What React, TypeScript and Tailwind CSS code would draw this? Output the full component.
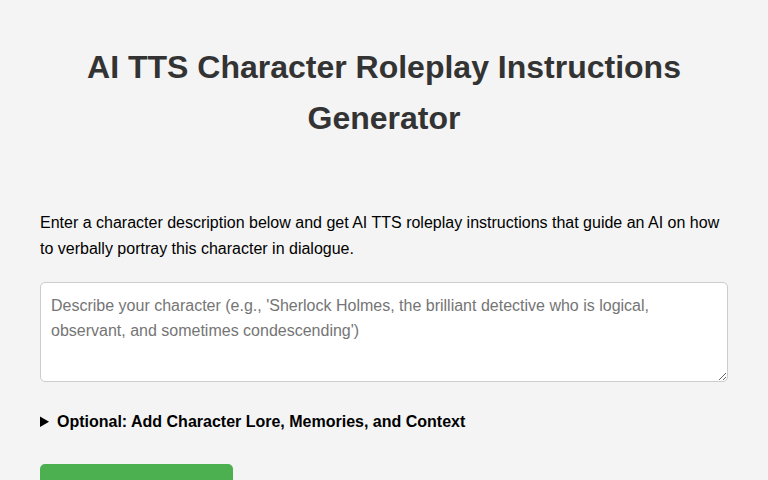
export default function App() {
  return (
    <div
      className="min-h-screen bg-[#f4f4f4] px-10 text-base leading-[1.6] text-[#222]"
      style={{ fontFamily: '"Liberation Sans", Arial, sans-serif' }}
    >
      <div className="pt-[42px]">
        <h1 className="text-center text-[32px] font-bold leading-[1.6] text-[#333]">
          AI TTS Character Roleplay Instructions
          <br />
          Generator
        </h1>

        <p className="mt-[66px] text-black">
          Enter a character description below and get AI TTS roleplay instructions that guide an AI on how
          to verbally portray this character in dialogue.
        </p>

        <textarea
          className="mt-[20px] block h-[100px] w-full resize-y rounded-[5px] border border-[#ccc] bg-white px-[10px] py-[10px] leading-[1.6] placeholder:text-[#757575]"
          placeholder="Describe your character (e.g., 'Sherlock Holmes, the brilliant detective who is logical, observant, and sometimes condescending')"
        />

        <details className="mt-[27px]">
          <summary className="cursor-pointer font-bold text-black">
            Optional: Add Character Lore, Memories, and Context
          </summary>
        </details>

        <button className="mt-[30px] w-[193px] rounded-[5px] bg-[#4caf50] px-5 py-[15px] font-bold text-white">
          Generate Instructions
        </button>
      </div>
    </div>
  );
}
